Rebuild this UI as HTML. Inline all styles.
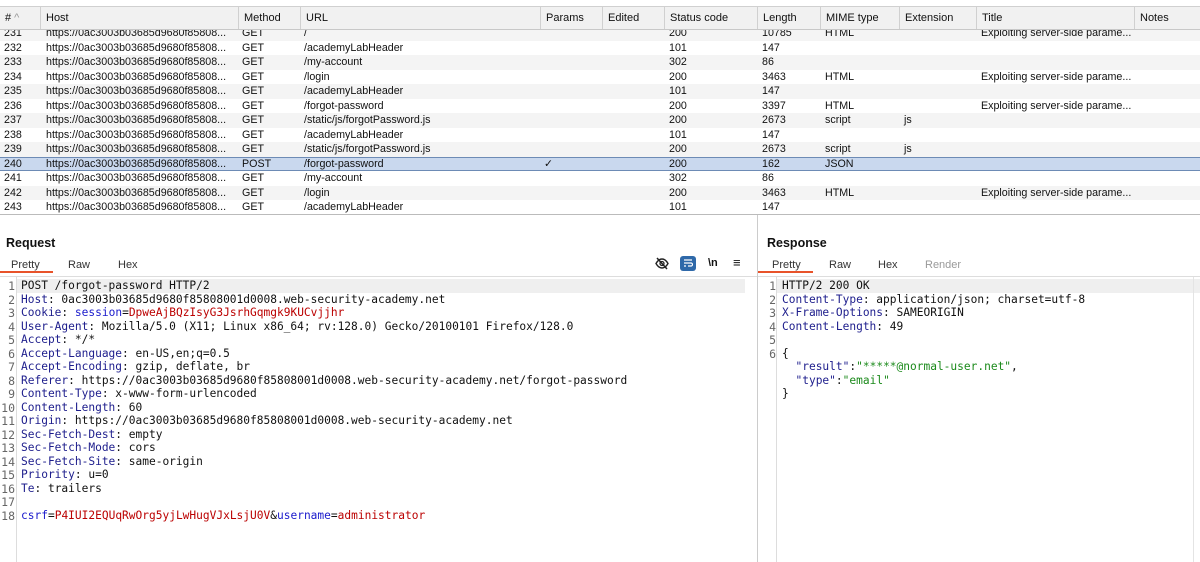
<!DOCTYPE html>
<html><head><meta charset="utf-8"><style>
*{margin:0;padding:0;box-sizing:border-box}
body{width:1200px;height:562px;overflow:hidden;background:#fff;font-family:"Liberation Sans","DejaVu Sans",sans-serif;font-size:11px;color:#111;position:relative}
.a{position:absolute;white-space:nowrap}
.hdr{position:absolute;top:6px;left:0;width:1200px;height:24px;background:#f1f1f1;border-top:1px solid #d0d0d0;border-bottom:1px solid #c8c8c8}
.hc{position:absolute;top:0;height:22px;line-height:22px;padding-left:5px;border-left:1px solid #d0d0d0}
.row{position:absolute;left:0;width:1200px;height:14.5px;line-height:14.5px;font-size:10.7px}
.row span{position:absolute;top:0}
.g{background:#f4f4f4}
.sel{background:#c9d8ee;border-top:1px solid #6d8bb5;border-bottom:1px solid #6d8bb5;line-height:12.5px}
.mono{font-family:"DejaVu Sans Mono","Liberation Mono",monospace;font-size:11.2px}
.ln{position:absolute;left:0;width:15px;text-align:right;color:#666;font-family:"DejaVu Sans Mono",monospace;font-size:11.5px}
.cl{position:absolute;white-space:pre}
.k{color:#1d1d8c}.r{color:#b00}.b{color:#1a1acc}.gr{color:#1b8a1b}
.tab{position:absolute;font-size:11px;color:#333}
</style></head><body>
<div class="hdr">
<div class="hc" style="left:0;border-left:none">#<span style="color:#999"> ^</span></div>
<div class="hc" style="left:40px">Host</div>
<div class="hc" style="left:238px">Method</div>
<div class="hc" style="left:300px">URL</div>
<div class="hc" style="left:540px">Params</div>
<div class="hc" style="left:602px">Edited</div>
<div class="hc" style="left:664px">Status code</div>
<div class="hc" style="left:757px">Length</div>
<div class="hc" style="left:820px">MIME type</div>
<div class="hc" style="left:899px">Extension</div>
<div class="hc" style="left:976px">Title</div>
<div class="hc" style="left:1134px">Notes</div>
</div>
<div style="position:absolute;top:30px;left:0;width:1200px;height:184px;overflow:hidden">
<div style="position:relative;top:-4px">
<div class="row g" style="top:0"><span style="left:4px">231</span><span style="left:46px">https://0ac3003b03685d9680f85808...</span><span style="left:242px">GET</span><span style="left:304px">/</span><span style="left:669px">200</span><span style="left:762px">10785</span><span style="left:825px">HTML</span><span style="left:981px">Exploiting server-side parame...</span></div>
<div class="row" style="top:14.5px"><span style="left:4px">232</span><span style="left:46px">https://0ac3003b03685d9680f85808...</span><span style="left:242px">GET</span><span style="left:304px">/academyLabHeader</span><span style="left:669px">101</span><span style="left:762px">147</span></div>
<div class="row g" style="top:29px"><span style="left:4px">233</span><span style="left:46px">https://0ac3003b03685d9680f85808...</span><span style="left:242px">GET</span><span style="left:304px">/my-account</span><span style="left:669px">302</span><span style="left:762px">86</span></div>
<div class="row" style="top:43.5px"><span style="left:4px">234</span><span style="left:46px">https://0ac3003b03685d9680f85808...</span><span style="left:242px">GET</span><span style="left:304px">/login</span><span style="left:669px">200</span><span style="left:762px">3463</span><span style="left:825px">HTML</span><span style="left:981px">Exploiting server-side parame...</span></div>
<div class="row g" style="top:58px"><span style="left:4px">235</span><span style="left:46px">https://0ac3003b03685d9680f85808...</span><span style="left:242px">GET</span><span style="left:304px">/academyLabHeader</span><span style="left:669px">101</span><span style="left:762px">147</span></div>
<div class="row" style="top:72.5px"><span style="left:4px">236</span><span style="left:46px">https://0ac3003b03685d9680f85808...</span><span style="left:242px">GET</span><span style="left:304px">/forgot-password</span><span style="left:669px">200</span><span style="left:762px">3397</span><span style="left:825px">HTML</span><span style="left:981px">Exploiting server-side parame...</span></div>
<div class="row g" style="top:87px"><span style="left:4px">237</span><span style="left:46px">https://0ac3003b03685d9680f85808...</span><span style="left:242px">GET</span><span style="left:304px">/static/js/forgotPassword.js</span><span style="left:669px">200</span><span style="left:762px">2673</span><span style="left:825px">script</span><span style="left:904px">js</span></div>
<div class="row" style="top:101.5px"><span style="left:4px">238</span><span style="left:46px">https://0ac3003b03685d9680f85808...</span><span style="left:242px">GET</span><span style="left:304px">/academyLabHeader</span><span style="left:669px">101</span><span style="left:762px">147</span></div>
<div class="row g" style="top:116px"><span style="left:4px">239</span><span style="left:46px">https://0ac3003b03685d9680f85808...</span><span style="left:242px">GET</span><span style="left:304px">/static/js/forgotPassword.js</span><span style="left:669px">200</span><span style="left:762px">2673</span><span style="left:825px">script</span><span style="left:904px">js</span></div>
<div class="row sel" style="top:130.5px"><span style="left:4px">240</span><span style="left:46px">https://0ac3003b03685d9680f85808...</span><span style="left:242px">POST</span><span style="left:304px">/forgot-password</span><span style="left:544px">✓</span><span style="left:669px">200</span><span style="left:762px">162</span><span style="left:825px">JSON</span></div>
<div class="row" style="top:145px"><span style="left:4px">241</span><span style="left:46px">https://0ac3003b03685d9680f85808...</span><span style="left:242px">GET</span><span style="left:304px">/my-account</span><span style="left:669px">302</span><span style="left:762px">86</span></div>
<div class="row g" style="top:159.5px"><span style="left:4px">242</span><span style="left:46px">https://0ac3003b03685d9680f85808...</span><span style="left:242px">GET</span><span style="left:304px">/login</span><span style="left:669px">200</span><span style="left:762px">3463</span><span style="left:825px">HTML</span><span style="left:981px">Exploiting server-side parame...</span></div>
<div class="row" style="top:174px"><span style="left:4px">243</span><span style="left:46px">https://0ac3003b03685d9680f85808...</span><span style="left:242px">GET</span><span style="left:304px">/academyLabHeader</span><span style="left:669px">101</span><span style="left:762px">147</span></div>
</div></div>
<div style="position:absolute;top:214px;left:0;width:1200px;height:1px;background:#bbb"></div>
<div style="position:absolute;top:215px;left:757px;width:1px;height:347px;background:#ccc"></div>

<div class="a" style="left:6px;top:236px;font-size:12.5px;font-weight:bold">Request</div>
<div class="tab" style="left:11px;top:259px">Pretty</div>
<div class="tab" style="left:68px;top:259px">Raw</div>
<div class="tab" style="left:118px;top:259px">Hex</div>
<div style="position:absolute;left:0;top:271px;width:53px;height:2px;background:#e8532a"></div>
<div style="position:absolute;left:0;top:276px;width:757px;height:1px;background:#ddd"></div>
<svg style="position:absolute;left:655px;top:257px" width="14" height="13" viewBox="0 0 14 13"><path d="M1 6.5C3 3 5 2 7 2s4 1 6 4.5C11 10 9 11 7 11S3 10 1 6.5z" fill="none" stroke="#222" stroke-width="1.4"/><circle cx="7" cy="6.5" r="2" fill="none" stroke="#222" stroke-width="1.3"/><path d="M2 1l10 11" stroke="#222" stroke-width="1.5"/></svg>
<div style="position:absolute;left:680px;top:256px;width:16px;height:15px;background:#2f69a9;border-radius:3px"></div>
<svg style="position:absolute;left:683px;top:259px" width="10" height="9" viewBox="0 0 10 9"><path d="M1 1h8M1 4h7a1.5 1.5 0 010 3H5M1 7h2" stroke="#fff" stroke-width="1.2" fill="none"/></svg>
<div class="a" style="left:708px;top:257px;font-size:11px;font-weight:bold">\n</div>
<div class="a" style="left:733px;top:255px;font-size:13px">≡</div>

<div style="position:absolute;left:16px;top:277px;width:1px;height:285px;background:#ddd"></div>
<div style="position:absolute;left:17px;top:279px;width:728px;height:13.5px;background:#efefef"></div>
<div class="mono" style="position:absolute;left:0;top:279px;width:757px">
<div class="ln" style="top:0">1</div><div class="cl" style="left:21px;top:0">POST /forgot-password HTTP/2</div>
<div class="ln" style="top:13.5px">2</div><div class="cl" style="left:21px;top:13.5px"><span class="k">Host</span>: 0ac3003b03685d9680f85808001d0008.web-security-academy.net</div>
<div class="ln" style="top:27px">3</div><div class="cl" style="left:21px;top:27px"><span class="k">Cookie</span>: <span class="b">session</span>=<span class="r">DpweAjBQzIsyG3JsrhGqmgk9KUCvjjhr</span></div>
<div class="ln" style="top:40.5px">4</div><div class="cl" style="left:21px;top:40.5px"><span class="k">User-Agent</span>: Mozilla/5.0 (X11; Linux x86_64; rv:128.0) Gecko/20100101 Firefox/128.0</div>
<div class="ln" style="top:54px">5</div><div class="cl" style="left:21px;top:54px"><span class="k">Accept</span>: */*</div>
<div class="ln" style="top:67.5px">6</div><div class="cl" style="left:21px;top:67.5px"><span class="k">Accept-Language</span>: en-US,en;q=0.5</div>
<div class="ln" style="top:81px">7</div><div class="cl" style="left:21px;top:81px"><span class="k">Accept-Encoding</span>: gzip, deflate, br</div>
<div class="ln" style="top:94.5px">8</div><div class="cl" style="left:21px;top:94.5px"><span class="k">Referer</span>: https://0ac3003b03685d9680f85808001d0008.web-security-academy.net/forgot-password</div>
<div class="ln" style="top:108px">9</div><div class="cl" style="left:21px;top:108px"><span class="k">Content-Type</span>: x-www-form-urlencoded</div>
<div class="ln" style="top:121.5px">10</div><div class="cl" style="left:21px;top:121.5px"><span class="k">Content-Length</span>: 60</div>
<div class="ln" style="top:135px">11</div><div class="cl" style="left:21px;top:135px"><span class="k">Origin</span>: https://0ac3003b03685d9680f85808001d0008.web-security-academy.net</div>
<div class="ln" style="top:148.5px">12</div><div class="cl" style="left:21px;top:148.5px"><span class="k">Sec-Fetch-Dest</span>: empty</div>
<div class="ln" style="top:162px">13</div><div class="cl" style="left:21px;top:162px"><span class="k">Sec-Fetch-Mode</span>: cors</div>
<div class="ln" style="top:175.5px">14</div><div class="cl" style="left:21px;top:175.5px"><span class="k">Sec-Fetch-Site</span>: same-origin</div>
<div class="ln" style="top:189px">15</div><div class="cl" style="left:21px;top:189px"><span class="k">Priority</span>: u=0</div>
<div class="ln" style="top:202.5px">16</div><div class="cl" style="left:21px;top:202.5px"><span class="k">Te</span>: trailers</div>
<div class="ln" style="top:216px">17</div>
<div class="ln" style="top:229.5px">18</div><div class="cl" style="left:21px;top:229.5px"><span class="b">csrf</span>=<span class="r">P4IUI2EQUqRwOrg5yjLwHugVJxLsjU0V</span>&amp;<span class="b">username</span>=<span class="r">administrator</span></div>
</div>

<div class="a" style="left:767px;top:236px;font-size:12.5px;font-weight:bold">Response</div>
<div class="tab" style="left:772px;top:259px">Pretty</div>
<div class="tab" style="left:829px;top:259px">Raw</div>
<div class="tab" style="left:878px;top:259px">Hex</div>
<div class="tab" style="left:925px;top:259px;color:#999">Render</div>
<div style="position:absolute;left:758px;top:271px;width:55px;height:2px;background:#e8532a"></div>
<div style="position:absolute;left:758px;top:276px;width:442px;height:1px;background:#ddd"></div>
<div style="position:absolute;left:776px;top:277px;width:1px;height:285px;background:#ddd"></div>
<div style="position:absolute;left:777px;top:279px;width:423px;height:13.5px;background:#efefef"></div>
<div class="mono" style="position:absolute;left:761px;top:279px;width:439px">
<div class="ln" style="top:0">1</div><div class="cl" style="left:21px;top:0">HTTP/2 200 OK</div>
<div class="ln" style="top:13.5px">2</div><div class="cl" style="left:21px;top:13.5px"><span class="k">Content-Type</span>: application/json; charset=utf-8</div>
<div class="ln" style="top:27px">3</div><div class="cl" style="left:21px;top:27px"><span class="k">X-Frame-Options</span>: SAMEORIGIN</div>
<div class="ln" style="top:40.5px">4</div><div class="cl" style="left:21px;top:40.5px"><span class="k">Content-Length</span>: 49</div>
<div class="ln" style="top:54px">5</div>
<div class="ln" style="top:67.5px">6</div><div class="cl" style="left:21px;top:67.5px">{</div>
<div class="cl" style="left:21px;top:81px">  <span class="k">"result"</span>:<span class="gr">"*****@normal-user.net"</span>,</div>
<div class="cl" style="left:21px;top:94.5px">  <span class="k">"type"</span>:<span class="gr">"email"</span></div>
<div class="cl" style="left:21px;top:108px">}</div>
</div>
<div style="position:absolute;left:1193px;top:277px;width:1px;height:285px;background:#e4e4e4"></div>
</body></html>
